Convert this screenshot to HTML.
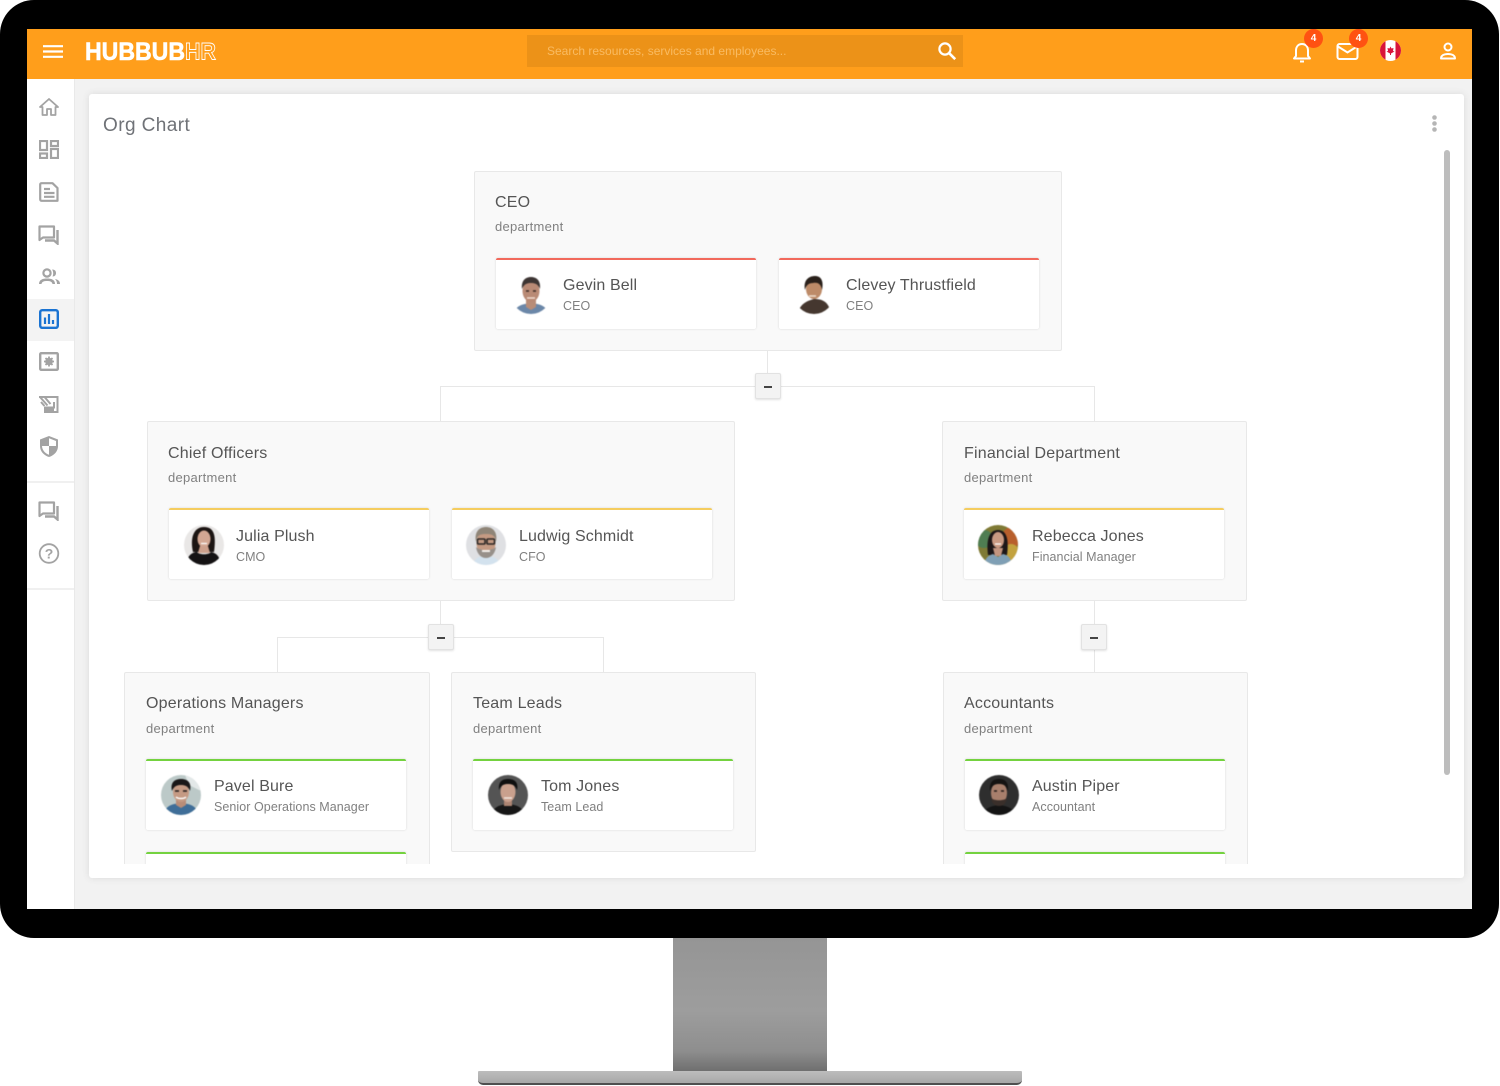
<!DOCTYPE html>
<html><head><meta charset="utf-8"><title>Org Chart</title>
<style>
html,body{margin:0;padding:0;background:#fff}
#p{position:relative;width:1500px;height:1086px;overflow:hidden;background:#fff;font-family:"Liberation Sans",sans-serif}
#p div,#p svg,#p span{position:absolute;box-sizing:border-box}
.d{background:#f9f9f9;border:1px solid #e8e8e8;border-radius:2px}
.t{font-size:16px;color:#555;line-height:20px;letter-spacing:.2px;white-space:nowrap}
.n{font-size:16px;color:#555;line-height:20px;letter-spacing:.12px;white-space:nowrap}
.s{font-size:12.5px;color:#808080;line-height:16px;letter-spacing:.06px;white-space:nowrap}
.e{font-size:13px;color:#808080;line-height:16px;letter-spacing:.28px;white-space:nowrap}
.c{background:#fff;border-radius:2px;box-shadow:0 0 2px rgba(0,0,0,.14);height:71px;width:261px;border-top:2px solid}
.r{border-top-color:#f2695c}.y{border-top-color:#f5cd5f}.g{border-top-color:#74d23f}
.l{background:#e7e7e7}
.b{width:26px;height:26px;background:#f3f3f3;border:1px solid #e2e2e2;border-radius:2px;box-shadow:0 1px 2px rgba(0,0,0,.12)}
.b:after{content:"";position:absolute;left:8px;top:11.500px;width:8px;height:2px;background:#444}
.i{fill:none;stroke:#a3a3a3;stroke-width:2.200}
.a{filter:blur(.4px)}
</style></head><body><div id="p">

<!-- monitor -->
<div style="left:673px;top:938px;width:154px;height:133px;background:linear-gradient(180deg,#959595 0,#9d9d9d 55%,#8e8e8e 85%,#6f6f6f 100%)"></div>
<div style="left:478px;top:1071px;width:544px;height:14px;background:linear-gradient(180deg,#bdbdbd,#a8a8a8);border-radius:1px 1px 5px 5px;border-bottom:2px solid #4f4f4f"></div>
<div style="left:0;top:0;width:1499px;height:938px;background:#000;border-radius:34px"></div>

<!-- screen -->
<div style="left:27px;top:29px;width:1445px;height:880px;background:#f2f2f2;overflow:hidden">
  <div style="left:0;top:0;width:1445px;height:50px;background:#ff9e1b"></div>
  <div style="left:0;top:50px;width:48px;height:830px;background:#fff;border-right:1px solid #e9e9e9"></div>
  <div style="left:0;top:270px;width:47px;height:42px;background:#f3f3f3"></div>
  <div style="left:0;top:452px;width:47px;height:2px;background:#f0f0f0"></div>
  <div style="left:0;top:559px;width:47px;height:2px;background:#f0f0f0"></div>
</div>

<!-- header -->
<svg style="left:43px;top:45px" width="20" height="13"><path d="M0 1.200H20M0 6.500H20M0 11.800H20" stroke="#fff" stroke-width="2.200"/></svg>
<svg style="left:84px;top:38px" width="136" height="26"><text x="1" y="22" font-family="Liberation Sans" font-weight="700" font-size="25" fill="#fff" stroke="#fff" stroke-width=".6" textLength="100" lengthAdjust="spacingAndGlyphs">HUBBUB</text><text x="101" y="21.500" font-family="Liberation Sans" font-weight="700" font-size="24.500" fill="none" stroke="#fff" stroke-width=".9" textLength="31" lengthAdjust="spacingAndGlyphs">HR</text></svg>
<div style="left:527px;top:35px;width:436px;height:32px;background:#ec9218"></div>
<div style="left:547px;top:43px;font-size:12px;line-height:16px;color:#f9bb62;white-space:nowrap">Search resources, services and employees...</div>
<svg style="left:937px;top:41px" width="20" height="20"><circle cx="8" cy="8" r="5.600" fill="none" stroke="#fff" stroke-width="2.200"/><path d="M12.200 12.200L18.200 18.200" stroke="#fff" stroke-width="2.600"/></svg>

<svg style="left:1292px;top:41px" width="20" height="22" fill="none" stroke="#fff" stroke-width="2"><path d="M2 17.500H18L16 15V9.500C16 5.500 13.500 3 10 3S4 5.500 4 9.500V15Z" stroke-linejoin="round"/><path d="M8 20.500H12"/></svg>
<div style="left:1304px;top:29px;width:19px;height:19px;border-radius:50%;background:#ff5212;color:#fff;font-size:10px;font-weight:700;line-height:19px;text-align:center">4</div>
<svg style="left:1336px;top:42px" width="23" height="18" fill="none" stroke="#fff" stroke-width="2"><rect x="1.500" y="2" width="20" height="15" rx="2"/><path d="M2 4.500L11.500 10.500L21 4.500"/></svg>
<div style="left:1349px;top:29px;width:19px;height:19px;border-radius:50%;background:#ff5212;color:#fff;font-size:10px;font-weight:700;line-height:19px;text-align:center">4</div>
<svg style="left:1380px;top:40px" width="21" height="21" viewBox="0 0 21 21"><clipPath id="f"><circle cx="10.500" cy="10.500" r="10.500"/></clipPath><g clip-path="url(#f)"><rect width="21" height="21" fill="#fff"/><rect width="5.500" height="21" fill="#d8143a"/><rect x="15.500" width="5.500" height="21" fill="#d8143a"/><path d="M10.500 6.500L11.500 8.500L13.500 8L13 11L14.500 11.500L11 13.500V15H10V13.500L6.500 11.500L8 11L7.500 8L9.500 8.500Z" fill="#d8143a"/></g></svg>
<svg style="left:1439px;top:42px" width="18" height="18" fill="none" stroke="#fff" stroke-width="2"><circle cx="9" cy="5" r="3.500"/><path d="M2 16.500C2 13.500 5 12 9 12S16 13.500 16 16.500Z" stroke-linejoin="round"/></svg>

<!-- sidebar icons -->
<svg class="i" style="left:39px;top:98px" width="20" height="18"><path d="M1 9L10 1L19 9H16.500V17H12V11H8V17H3.500V9Z" stroke-width="1.800" stroke-linejoin="round"/></svg>
<svg class="i" style="left:39px;top:140px" width="20" height="19"><rect x="1" y="1" width="7" height="9"/><rect x="12" y="1" width="7" height="5"/><rect x="1" y="13.500" width="7" height="4.500"/><rect x="12" y="9" width="7" height="9"/></svg>
<svg class="i" style="left:39px;top:182px" width="20" height="20"><path d="M2.500 1.200H13.500L18.500 6V18.800H2.500C1.500 18.800 1.200 18 1.200 17V2.500C1.200 1.800 1.800 1.200 2.500 1.200Z" stroke-linejoin="round"/><path d="M5 7H11M5 11H15.500M5 14.800H15.500"/></svg>
<svg class="i" style="left:38px;top:225px" width="22" height="20"><path d="M1.500 1.500H16V12.500H5L1.500 15Z" stroke-linejoin="round"/><path d="M19.500 5V18.500L16 15.500H7" stroke-width="2.400"/></svg>
<svg style="left:38px;top:268px" width="23" height="18" fill="#a3a3a3"><circle cx="9" cy="5" r="3.600" fill="none" stroke="#a3a3a3" stroke-width="2.200"/><path d="M1 16C1 11.500 5 10.500 9 10.500S17 11.500 17 16H14.500C14 13.500 12 13 9 13S4 13.500 3.500 16Z"/><path d="M14 1.500C17 1.500 18 3 18 5S17 8.500 14.500 8.500C15.500 6.500 15.500 3.500 14 1.500ZM17 11C20 11.500 22 13 22 16H19C19 14 18.500 12.500 17 11Z"/></svg>
<svg style="left:39px;top:309px" width="20" height="20"><rect x="1.200" y="1.200" width="17.600" height="17.600" rx="2" fill="none" stroke="#1a73d2" stroke-width="2.400"/><path d="M6 8.500V15M10 5V15M14 11V15" stroke="#1a73d2" stroke-width="2.200"/></svg>
<svg style="left:39px;top:352px" width="20" height="19"><rect x="1.200" y="1.200" width="17.600" height="16.600" rx="1" fill="none" stroke="#a3a3a3" stroke-width="2.400"/><circle cx="10" cy="9.500" r="3.800" fill="#a3a3a3"/><circle cx="10" cy="9.500" r="1.200" fill="#fff"/><path d="M10 4.500V14.500M5 9.500H15M6.500 6L13.500 13M13.500 6L6.500 13" stroke="#a3a3a3" stroke-width="1.800"/></svg>
<svg style="left:38px;top:395px" width="21" height="18" fill="none" stroke="#a3a3a3" stroke-width="2"><path d="M1 2H19.500V17H7V12.500H16V7"/><path d="M2 2L9.500 10.500M6.500 2L12.500 9M3 7L6.500 11"/><rect x="6" y="12" width="10" height="5" fill="#a3a3a3" stroke="none"/></svg>
<svg style="left:39px;top:435px" width="20" height="23"><path d="M10 1L19 4.500V11C19 16.500 15 20.500 10 22C5 20.500 1 16.500 1 11V4.500Z" fill="#a3a3a3"/><path d="M10 3.200L17 6V11H10ZM10 11V19.800C6.500 18.500 3.200 15.500 3 11Z" fill="#fff"/></svg>
<svg class="i" style="left:38px;top:501px" width="22" height="20"><path d="M1.500 1.500H16V12.500H5L1.500 15Z" stroke-linejoin="round"/><path d="M19.500 5V18.500L16 15.500H7" stroke-width="2.400"/></svg>
<svg style="left:38px;top:543px" width="22" height="21"><circle cx="11" cy="10.500" r="9.300" fill="none" stroke="#a3a3a3" stroke-width="1.800"/><text x="11" y="15.500" text-anchor="middle" font-family="Liberation Sans" font-size="14" font-weight="700" fill="#a3a3a3">?</text></svg>

<!-- card -->
<div style="left:89px;top:94px;width:1375px;height:784px;background:#fff;border-radius:3px;box-shadow:0 0 8px rgba(0,0,0,.1)"></div>
<div style="left:103px;top:114px;font-size:19px;line-height:24px;color:#6f7277;letter-spacing:.42px;white-space:nowrap">Org Chart</div>
<svg style="left:1431px;top:115px" width="7" height="18" fill="#b5b5b5"><circle cx="3.500" cy="2.500" r="2.300"/><circle cx="3.500" cy="8.500" r="2.300"/><circle cx="3.500" cy="14.500" r="2.300"/></svg>
<div style="left:1444px;top:150px;width:6px;height:625px;background:#bdbdbd;border-radius:3px"></div>

<!-- chart viewport -->
<div style="left:0;top:0;width:1500px;height:864px;overflow:hidden">
<!-- connectors -->
<div class="l" style="left:767px;top:351px;width:1px;height:23px"></div>
<div class="l" style="left:440px;top:386px;width:655px;height:1px"></div>
<div class="l" style="left:440px;top:386px;width:1px;height:36px"></div>
<div class="l" style="left:1094px;top:386px;width:1px;height:36px"></div>
<div class="b" style="left:755px;top:373px"></div>
<div class="l" style="left:440px;top:601px;width:1px;height:24px"></div>
<div class="l" style="left:277px;top:637px;width:327px;height:1px"></div>
<div class="l" style="left:277px;top:637px;width:1px;height:36px"></div>
<div class="l" style="left:603px;top:637px;width:1px;height:36px"></div>
<div class="b" style="left:428px;top:624px"></div>
<div class="l" style="left:1094px;top:601px;width:1px;height:72px"></div>
<div class="b" style="left:1081px;top:624px"></div>

<!-- departments -->
<div class="d" style="left:474px;top:171px;width:588px;height:180px"></div>
<div class="d" style="left:147px;top:421px;width:588px;height:180px"></div>
<div class="d" style="left:942px;top:421px;width:305px;height:180px"></div>
<div class="d" style="left:124px;top:672px;width:306px;height:240px"></div>
<div class="d" style="left:451px;top:672px;width:305px;height:180px"></div>
<div class="d" style="left:943px;top:672px;width:305px;height:240px"></div>

<div class="t" style="left:495px;top:193px">CEO</div><div class="e" style="left:495px;top:219px">department</div>
<div class="t" style="left:168px;top:444px">Chief Officers</div><div class="e" style="left:168px;top:470px">department</div>
<div class="t" style="left:964px;top:444px">Financial Department</div><div class="e" style="left:964px;top:470px">department</div>
<div class="t" style="left:146px;top:694px">Operations Managers</div><div class="e" style="left:146px;top:721px">department</div>
<div class="t" style="left:473px;top:694px">Team Leads</div><div class="e" style="left:473px;top:721px">department</div>
<div class="t" style="left:964px;top:694px">Accountants</div><div class="e" style="left:964px;top:721px">department</div>

<!-- person cards -->
<div class="c r" style="left:496px;top:258px;width:260px"></div>
<div class="c r" style="left:779px;top:258px;width:260px"></div>
<div class="c y" style="left:169px;top:508px;width:260px"></div>
<div class="c y" style="left:452px;top:508px;width:260px"></div>
<div class="c y" style="left:964px;top:508px;width:260px"></div>
<div class="c g" style="left:146px;top:759px;width:260px"></div>
<div class="c g" style="left:146px;top:852px;width:260px"></div>
<div class="c g" style="left:473px;top:759px;width:260px"></div>
<div class="c g" style="left:965px;top:759px;width:260px"></div>
<div class="c g" style="left:965px;top:852px;width:260px"></div>

<div class="n" style="left:563px;top:276px">Gevin Bell</div><div class="s" style="left:563px;top:298px">CEO</div>
<div class="n" style="left:846px;top:276px">Clevey Thrustfield</div><div class="s" style="left:846px;top:298px">CEO</div>
<div class="n" style="left:236px;top:527px">Julia Plush</div><div class="s" style="left:236px;top:549px">CMO</div>
<div class="n" style="left:519px;top:527px">Ludwig Schmidt</div><div class="s" style="left:519px;top:549px">CFO</div>
<div class="n" style="left:1032px;top:527px">Rebecca Jones</div><div class="s" style="left:1032px;top:549px">Financial Manager</div>
<div class="n" style="left:214px;top:777px">Pavel Bure</div><div class="s" style="left:214px;top:799px">Senior Operations Manager</div>
<div class="n" style="left:541px;top:777px">Tom Jones</div><div class="s" style="left:541px;top:799px">Team Lead</div>
<div class="n" style="left:1032px;top:777px">Austin Piper</div><div class="s" style="left:1032px;top:799px">Accountant</div>

<!-- avatars -->
<svg class="a" style="left:511px;top:274px" width="40" height="40" viewBox="0 0 40 40"><clipPath id="a"><circle cx="20" cy="20" r="20"/></clipPath><g clip-path="url(#a)"><path d="M3 40C4 32 11 30 20 29C29 30 36 32 37 40Z" fill="#6b87a8"/><path d="M15 25H25V33L20 36L15 33Z" fill="#b88d78"/><ellipse cx="20" cy="17" rx="8.500" ry="11" fill="#b98a75"/><path d="M11 15C10 6 15 3 20 3S30 6 29 15C27 10 24 9 20 9S13 10 11 15Z" fill="#3d3533"/><path d="M15 17H18M22 17H25" stroke="#3a2a25" stroke-width="1.400"/><path d="M16 24H24" stroke="#f1ddd2" stroke-width="1.600"/></g></svg>
<svg class="a" style="left:794px;top:274px" width="40" height="40" viewBox="0 0 40 40"><clipPath id="b"><circle cx="20" cy="20" r="20"/></clipPath><g clip-path="url(#b)"><path d="M4 40C5 31 12 27 20 25C29 25 35 28 37 40Z" fill="#45372f"/><ellipse cx="20" cy="15" rx="8" ry="10" fill="#bd8b68"/><path d="M11 16C9 6 15 2 21 2S30 7 28 16C27 10 24 8 19 9C15 9 12 11 11 16Z" fill="#2a211b"/><path d="M15 22H22" stroke="#f0dfd0" stroke-width="1.500"/></g></svg>
<svg class="a" style="left:184px;top:525px" width="40" height="40" viewBox="0 0 40 40"><clipPath id="c"><circle cx="20" cy="20" r="20"/></clipPath><g clip-path="url(#c)"><rect width="40" height="40" fill="#e9e7e6"/><path d="M9 27C6 14 9 2 20 2S32 12 30 27Z" fill="#1c1513"/><ellipse cx="20" cy="14" rx="6.500" ry="8.500" fill="#d3a793"/><path d="M16 21H24L26 28H14Z" fill="#cda08c"/><path d="M2 40C3 30 9 27 13 27C15 30 25 30 27 27C32 28 36 31 37 40Z" fill="#141213"/><path d="M17 18.500H23" stroke="#fff" stroke-width="1.300"/></g></svg>
<svg class="a" style="left:466px;top:525px" width="40" height="40" viewBox="0 0 40 40"><clipPath id="d"><circle cx="20" cy="20" r="20"/></clipPath><g clip-path="url(#d)"><rect width="40" height="40" fill="#dfe0e3"/><path d="M7 40C8 33 14 31 20 31S33 33 34 40Z" fill="#d3e2ee"/><ellipse cx="20" cy="18" rx="9.500" ry="13" fill="#c49a83"/><path d="M10 17C8 6 14 2 20 2S32 6 30 17C29 10 26 9 20 9S11 10 10 17Z" fill="#8f8578"/><path d="M10 22C11 29 15 33 20 33S29 29 30 22C26 26 14 26 10 22Z" fill="#97908a"/><rect x="11.500" y="14" width="7.500" height="5" rx="1" fill="none" stroke="#2c2826" stroke-width="1.600"/><rect x="21" y="14" width="7.500" height="5" rx="1" fill="none" stroke="#2c2826" stroke-width="1.600"/><path d="M16 26H24" stroke="#f3f0ec" stroke-width="2"/></g></svg>
<svg class="a" style="left:978px;top:525px" width="40" height="40" viewBox="0 0 40 40"><clipPath id="e"><circle cx="20" cy="20" r="20"/></clipPath><g clip-path="url(#e)"><rect width="40" height="40" fill="#7f7a35"/><circle cx="6" cy="14" r="9" fill="#4f7d52"/><circle cx="34" cy="12" r="10" fill="#b85f2c"/><circle cx="33" cy="27" r="8" fill="#c3a23e"/><path d="M10 30C8 15 11 5 20 5S31 15 29 30Z" fill="#1d1718"/><ellipse cx="20" cy="15" rx="6" ry="8" fill="#c99a83"/><path d="M6 40C7 32 12 30 15 29L20 32L25 29C29 30 33 32 34 40Z" fill="#7f9fb5"/><path d="M15 23H25L23 31H17Z" fill="#c39580"/><path d="M17 19H23" stroke="#fff" stroke-width="1.300"/></g></svg>
<svg class="a" style="left:161px;top:775px" width="40" height="40" viewBox="0 0 40 40"><clipPath id="g"><circle cx="20" cy="20" r="20"/></clipPath><g clip-path="url(#g)"><rect width="40" height="40" fill="#bcc9c8"/><path d="M24 0H40V16L28 10Z" fill="#e3e8e8"/><path d="M3 40C4 31 10 29 20 28C30 29 36 31 37 40Z" fill="#3f6e98"/><path d="M15 24H25V30L20 33L15 30Z" fill="#b98d78"/><ellipse cx="20" cy="17" rx="8" ry="10" fill="#c59a84"/><path d="M11 16C9 7 14 4 20 4S31 7 29 16C27 11 24 10 20 10S13 11 11 16Z" fill="#1a1718"/><path d="M14 16H18M22 16H26" stroke="#1f1a1a" stroke-width="1.500"/><path d="M15 22C17 24 23 24 25 22" stroke="#fff" stroke-width="1.500" fill="none"/></g></svg>
<svg class="a" style="left:488px;top:775px" width="40" height="40" viewBox="0 0 40 40"><clipPath id="h"><circle cx="20" cy="20" r="20"/></clipPath><g clip-path="url(#h)"><rect width="40" height="40" fill="#545454"/><path d="M4 40C5 32 11 30 20 29C29 30 35 32 36 40Z" fill="#161616"/><path d="M16 24H24V31H16Z" fill="#ac8472"/><ellipse cx="20" cy="17" rx="7.500" ry="10" fill="#c9a08d"/><path d="M11 15C10 6 15 4 20 4S31 6 29 15C27 10 24 9 20 9S13 10 11 15Z" fill="#0f0f0f"/><path d="M16 23H24" stroke="#f1e5df" stroke-width="1.400"/></g></svg>
<svg class="a" style="left:979px;top:775px" width="40" height="40" viewBox="0 0 40 40"><clipPath id="j"><circle cx="20" cy="20" r="20"/></clipPath><g clip-path="url(#j)"><rect width="40" height="40" fill="#2e2e2e"/><path d="M4 40C5 33 12 31 20 30C28 31 35 33 36 40Z" fill="#141414"/><ellipse cx="20" cy="18" rx="8" ry="11" fill="#a87f6c"/><path d="M11 16C10 6 15 4 20 4S30 6 29 16C27 10 24 9 20 9S13 10 11 16Z" fill="#151312"/><path d="M12 23C13 29 16 31 20 31S27 29 28 23C25 26 15 26 12 23Z" fill="#3a2f2a"/><path d="M15 16H18M22 16H25" stroke="#251c19" stroke-width="1.400"/></g></svg>
</div>
</div></body></html>
